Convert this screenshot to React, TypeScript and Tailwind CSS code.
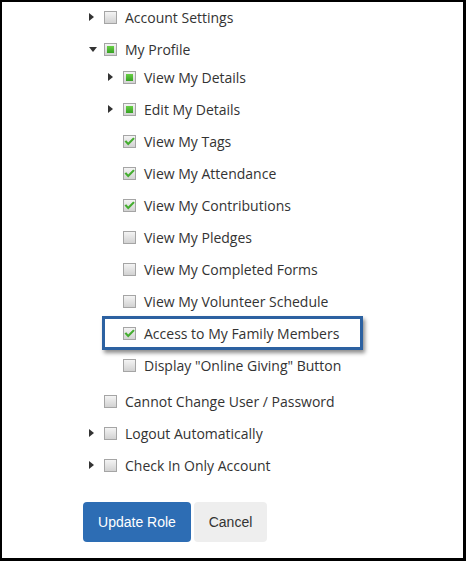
import React from "react";

type State = "off" | "on" | "partial";

type Node = {
  label: string;
  state: State;
  arrow?: "right" | "down";
  children?: Node[];
  highlight?: boolean;
};

const tree: Node[] = [
  { label: "Account Settings", state: "off", arrow: "right" },
  {
    label: "My Profile",
    state: "partial",
    arrow: "down",
    children: [
      { label: "View My Details", state: "partial", arrow: "right" },
      { label: "Edit My Details", state: "partial", arrow: "right" },
      { label: "View My Tags", state: "on" },
      { label: "View My Attendance", state: "on" },
      { label: "View My Contributions", state: "on" },
      { label: "View My Pledges", state: "off" },
      { label: "View My Completed Forms", state: "off" },
      { label: "View My Volunteer Schedule", state: "off" },
      { label: "Access to My Family Members", state: "on", highlight: true },
      { label: 'Display "Online Giving" Button', state: "off" },
    ],
  },
  { label: "Cannot Change User / Password", state: "off" },
  { label: "Logout Automatically", state: "off", arrow: "right" },
  { label: "Check In Only Account", state: "off", arrow: "right" },
];

function Arrow({ dir }: { dir?: "right" | "down" }) {
  return (
    <span className="w-[15px] h-[14px] flex items-center justify-start shrink-0">
      {dir === "right" && (
        <svg width="5" height="8" viewBox="0 0 5 8">
          <path d="M0 0 L5 4 L0 8 Z" fill="#333" />
        </svg>
      )}
      {dir === "down" && (
        <svg width="8" height="5" viewBox="0 0 8 5">
          <path d="M0 0 L8 0 L4 5 Z" fill="#333" />
        </svg>
      )}
    </span>
  );
}

function Check({ state }: { state: State }) {
  return (
    <span className="relative w-[13px] h-[13px] shrink-0 border border-[#a5a5a5] bg-gradient-to-b from-[#f4f4f4] to-[#d2d2d2]">
      {state === "partial" && (
        <span className="absolute inset-[2px] bg-gradient-to-b from-[#68cf45] to-[#36a223]" />
      )}
      {state === "on" && (
        <svg className="absolute left-0 top-0" width="11" height="11" viewBox="0 0 11 11">
          <path d="M0.5 5.5 L4.2 9.5 L10.8 2.8 L9.2 1.4 L4.2 6.4 L2.2 4.2 Z" fill="#44ad2f" />
        </svg>
      )}
    </span>
  );
}

function Row({ node }: { node: Node }) {
  const inner = (
    <div className="flex items-center h-8">
      <Arrow dir={node.arrow} />
      <Check state={node.state} />
      <span className="ml-2 text-[14px] text-[#333] whitespace-nowrap">{node.label}</span>
    </div>
  );
  return (
    <li>
      {node.highlight ? (
        <div className="h-8 flex items-center">
          <div className="-ml-[6px] w-[261px] h-[34px] border-[3px] border-[#2c61a1] pl-[3px] flex items-center shadow-[2px_3px_4px_rgba(0,0,0,0.45)]">
            {inner}
          </div>
        </div>
      ) : (
        inner
      )}
      {node.children && (
        <ul className="pl-[19px] -mt-1 mb-1">
          {node.children.map((c) => (
            <Row key={c.label} node={c} />
          ))}
        </ul>
      )}
    </li>
  );
}

export default function App() {
  return (
    <div
      className="w-[466px] h-[561px] bg-white border-l-2 border-t-2 border-r-[3px] border-b-[3px] border-black overflow-hidden"
      style={{ fontFamily: '"Open Sans", sans-serif' }}
    >
      <ul className="pl-[87px] -mt-px">
        {tree.map((n) => (
          <Row key={n.label} node={n} />
        ))}
      </ul>
      <div className="flex gap-[3px] pl-[81px] mt-[21px]">
        <button
          className="h-10 w-[108px] rounded bg-[#2d6db4] text-white text-[14px]"
          style={{ fontFamily: '"Liberation Sans", Arial, sans-serif' }}
        >
          Update Role
        </button>
        <button
          className="h-10 w-[73px] rounded bg-[#eeeeee] text-[#333] text-[14px]"
          style={{ fontFamily: '"Liberation Sans", Arial, sans-serif' }}
        >
          Cancel
        </button>
      </div>
    </div>
  );
}
